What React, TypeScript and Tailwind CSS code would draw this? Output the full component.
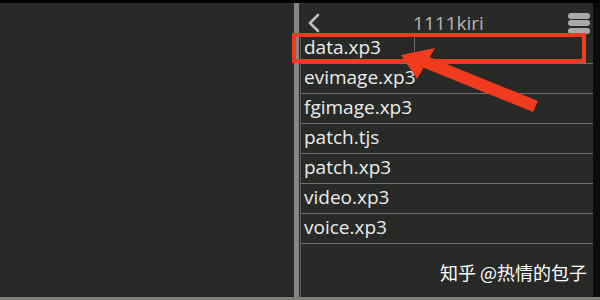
const files = ['data.xp3', 'evimage.xp3', 'fgimage.xp3', 'patch.tjs', 'patch.xp3', 'video.xp3', 'voice.xp3']

function BackIcon() {
  return (
    <svg width="14" height="20" viewBox="0 0 14 20" fill="none">
      <path d="M11 2 L3 10 L11 18" stroke="#bdbdbd" strokeWidth="2.6" strokeLinecap="round" strokeLinejoin="round" />
    </svg>
  )
}

function MenuIcon() {
  return (
    <div className="flex flex-col gap-[1.5px]">
      <div className="w-[22px] h-[6px] rounded-[3px] bg-[#a9aaa8]" />
      <div className="w-[22px] h-[6px] rounded-[3px] bg-[#a9aaa8]" />
      <div className="w-[22px] h-[6px] rounded-[3px] bg-[#a9aaa8]" />
    </div>
  )
}

export default function App() {
  return (
    <div
      className="relative w-[600px] h-[300px] flex flex-col bg-[#272a27] border-t-[3px] border-t-black border-b-[3px] border-b-[#7e807c] overflow-hidden"
      style={{ fontFamily: '"Open Sans", Roboto, "Noto Sans CJK SC", sans-serif' }}
    >
      <div className="flex flex-1">
        {/* empty left pane */}
        <div className="w-[294px] bg-[#272a27]" />
        <div className="w-[5px] bg-[#858784]" />
        <div className="w-[1px] bg-[#2e302d]" />

        {/* file browser */}
        <div className="flex-1 flex flex-col border-r-[7px] border-r-[#0b0b0b]">
          <div className="h-[31px] flex items-center pt-[9px] pl-[7px] pr-[3px]">
            <BackIcon />
            <div className="flex-1 text-center text-[19px] leading-none text-[#b6b6b4] pl-[8px]">1111kiri</div>
            <MenuIcon />
          </div>
          <div className="flex-1 flex flex-col border-l border-l-[#5b5d5a]">
            {files.map((f) => (
              <div
                key={f}
                className="relative h-[30px] shrink-0 flex items-center pl-[3px] border-b border-b-[#6e706c] text-[19px] leading-none text-[#ececec]"
              >
                <span className="-mt-[2px]">{f}</span>
                {f === 'data.xp3' && <div className="absolute left-[113px] top-[3px] w-px h-[23px] bg-[#6a6c68]" />}
              </div>
            ))}
            <div className="flex-1" />
          </div>
        </div>
      </div>

      {/* highlight box */}
      <div className="absolute left-[292px] top-[30px] w-[294px] h-[30px] border-[4px] border-[#f23a1f]" />

      {/* arrow */}
      <svg className="absolute left-0 top-[-3px]" width="600" height="300" viewBox="0 0 600 300">
        <polygon points="422,67 427,56 538,101 533,112" fill="#f23a1f" />
        <polygon points="401,55 435,48 417,79" fill="#f23a1f" />
      </svg>

      {/* watermark */}
      <div
        className="absolute left-[440px] top-[260px] text-[18px] text-white leading-none"
        style={{ fontFamily: '"Noto Sans CJK SC", "Noto Sans", sans-serif' }}
      >
        知乎 @热情的包子
      </div>
    </div>
  )
}
